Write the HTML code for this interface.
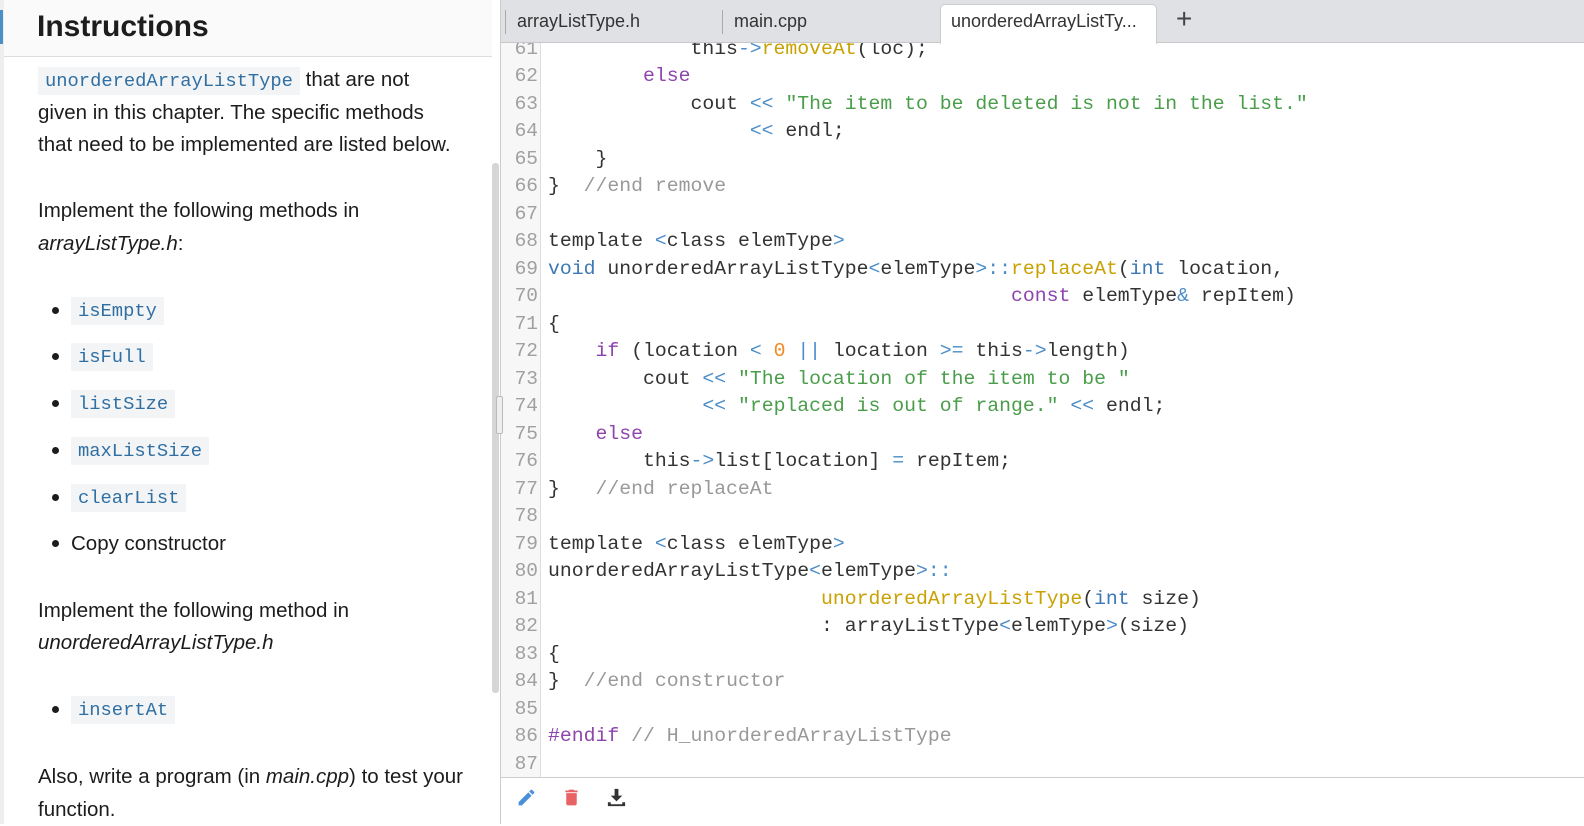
<!DOCTYPE html>
<html><head><meta charset="utf-8"><style>
*{margin:0;padding:0;box-sizing:border-box}
body{width:1584px;height:824px;overflow:hidden;background:#fff;font-family:"Liberation Sans",sans-serif;position:relative}
.left{position:absolute;left:0;top:0;width:500px;height:824px;background:#fff;border-left:4px solid #eee}
.hdr{position:absolute;left:0;top:0;width:488px;height:57px;background:#fafafa;border-bottom:1px solid #ddd}
.hdr h1{position:absolute;left:33px;top:10px;font-size:30px;font-weight:bold;color:#1d1d1d}
.stripe{position:absolute;left:0;top:10px;width:3px;height:34px;background:#4a90c8}
.t{position:absolute;left:34px;font-size:20.5px;line-height:32px;color:#1c1c1c;white-space:nowrap}
.c{font-family:"Liberation Mono",monospace;font-size:18.8px;color:#2f6fa3;background:#f3f4f5;padding:3px 7px}
.li{position:absolute;left:67px;font-size:20.5px;line-height:32px;color:#1c1c1c;white-space:nowrap}
.dot{position:absolute;left:48px;width:7px;height:7px;border-radius:50%;background:#1c1c1c}
.sb{position:absolute;left:492px;top:163px;width:7px;height:530px;background:#d6d6d6;border-radius:3px}
.split{position:absolute;left:496px;top:396px;width:7px;height:38px;background:#eee;border:1px solid #bbb;border-radius:2px}
.right{position:absolute;left:500px;top:0;width:1084px;height:824px;border-left:1px solid #ccc}
.tabs{position:absolute;left:0;top:0;width:1084px;height:43px;background:#dfe1e5;border-bottom:1px solid #c8c8c8}
.tab{position:absolute;top:11px;font-size:18px;color:#333}
.sep{position:absolute;top:10px;width:1px;height:24px;background:#aaa}
.act{position:absolute;left:439px;top:4px;width:217px;height:40px;background:#fff;border-radius:5px 5px 0 0;border:1px solid #ccc;border-bottom:none}
.gut{position:absolute;left:0;top:43px;width:40px;height:734px;background:#f7f7f7;border-right:1px solid #ddd}
.code{position:absolute;left:0;top:43px;width:1084px;height:734px;overflow:hidden}
.in{position:absolute;left:0;top:2px;width:1084px;height:734px}
.ln{position:absolute;left:0;width:37px;text-align:right;font-family:"Liberation Mono",monospace;font-size:19.5px;line-height:27.5px;color:#a0a0a0}
.cl{position:absolute;left:47px;font-family:"Liberation Mono",monospace;font-size:19.8px;line-height:27.5px;color:#333;white-space:pre}
.k{color:#8e44ad}.s{color:#4a9d4a}.f{color:#c9a100}.o{color:#4a8cc8}.m{color:#999}.n{color:#f08a24}.ty{color:#3b78b5}
.bar{position:absolute;left:0;top:777px;width:1084px;height:47px;border-top:1px solid #ccc;background:#fff}
</style></head><body>
<div class="left">
<div class="t" style="top:64px"><span class="c">unorderedArrayListType</span> that are not</div>
<div class="t" style="top:97px">given in this chapter. The specific methods</div>
<div class="t" style="top:129px">that need to be implemented are listed below.</div>
<div class="t" style="top:195px">Implement the following methods in</div>
<div class="t" style="top:228px"><i>arrayListType.h</i>:</div>
<div class="dot" style="top:307px"></div><div class="li" style="top:294px"><span class="c">isEmpty</span></div>
<div class="dot" style="top:353px"></div><div class="li" style="top:340px"><span class="c">isFull</span></div>
<div class="dot" style="top:400px"></div><div class="li" style="top:387px"><span class="c">listSize</span></div>
<div class="dot" style="top:447px"></div><div class="li" style="top:434px"><span class="c">maxListSize</span></div>
<div class="dot" style="top:494px"></div><div class="li" style="top:481px"><span class="c">clearList</span></div>
<div class="dot" style="top:540px"></div><div class="li" style="top:528px">Copy constructor</div>
<div class="t" style="top:595px">Implement the following method in</div>
<div class="t" style="top:627px"><i>unorderedArrayListType.h</i></div>
<div class="dot" style="top:706px"></div><div class="li" style="top:693px"><span class="c">insertAt</span></div>
<div class="t" style="top:761px">Also, write a program (in <i>main.cpp</i>) to test your</div>
<div class="t" style="top:794px">function.</div>
<div class="hdr"><h1>Instructions</h1></div>
</div>
<div class="stripe"></div>
<div class="sb"></div>
<div class="right">
<div class="gut"></div>
<div class="code"><div class="in">
<div class="ln" style="top:-9.5px">61</div><div class="cl" style="top:-9.5px">            this<span class="o">-&gt;</span><span class="f">removeAt</span>(loc);</div>
<div class="ln" style="top:18px">62</div><div class="cl" style="top:18px">        <span class="k">else</span></div>
<div class="ln" style="top:45.5px">63</div><div class="cl" style="top:45.5px">            cout <span class="o">&lt;&lt;</span> <span class="s">"The item to be deleted is not in the list."</span></div>
<div class="ln" style="top:73px">64</div><div class="cl" style="top:73px">                 <span class="o">&lt;&lt;</span> endl;</div>
<div class="ln" style="top:100.5px">65</div><div class="cl" style="top:100.5px">    }</div>
<div class="ln" style="top:128px">66</div><div class="cl" style="top:128px">}  <span class="m">//end remove</span></div>
<div class="ln" style="top:155.5px">67</div>
<div class="ln" style="top:183px">68</div><div class="cl" style="top:183px">template <span class="o">&lt;</span>class elemType<span class="o">&gt;</span></div>
<div class="ln" style="top:210.5px">69</div><div class="cl" style="top:210.5px"><span class="ty">void</span> unorderedArrayListType<span class="o">&lt;</span>elemType<span class="o">&gt;::</span><span class="f">replaceAt</span>(<span class="ty">int</span> location,</div>
<div class="ln" style="top:238px">70</div><div class="cl" style="top:238px">                                       <span class="k">const</span> elemType<span class="o">&amp;</span> repItem)</div>
<div class="ln" style="top:265.5px">71</div><div class="cl" style="top:265.5px">{</div>
<div class="ln" style="top:293px">72</div><div class="cl" style="top:293px">    <span class="k">if</span> (location <span class="o">&lt;</span> <span class="n">0</span> <span class="o">||</span> location <span class="o">&gt;=</span> this<span class="o">-&gt;</span>length)</div>
<div class="ln" style="top:320.5px">73</div><div class="cl" style="top:320.5px">        cout <span class="o">&lt;&lt;</span> <span class="s">"The location of the item to be "</span></div>
<div class="ln" style="top:348px">74</div><div class="cl" style="top:348px">             <span class="o">&lt;&lt;</span> <span class="s">"replaced is out of range."</span> <span class="o">&lt;&lt;</span> endl;</div>
<div class="ln" style="top:375.5px">75</div><div class="cl" style="top:375.5px">    <span class="k">else</span></div>
<div class="ln" style="top:403px">76</div><div class="cl" style="top:403px">        this<span class="o">-&gt;</span>list[location] <span class="o">=</span> repItem;</div>
<div class="ln" style="top:430.5px">77</div><div class="cl" style="top:430.5px">}   <span class="m">//end replaceAt</span></div>
<div class="ln" style="top:458px">78</div>
<div class="ln" style="top:485.5px">79</div><div class="cl" style="top:485.5px">template <span class="o">&lt;</span>class elemType<span class="o">&gt;</span></div>
<div class="ln" style="top:513px">80</div><div class="cl" style="top:513px">unorderedArrayListType<span class="o">&lt;</span>elemType<span class="o">&gt;::</span></div>
<div class="ln" style="top:540.5px">81</div><div class="cl" style="top:540.5px">                       <span class="f">unorderedArrayListType</span>(<span class="ty">int</span> size)</div>
<div class="ln" style="top:568px">82</div><div class="cl" style="top:568px">                       : arrayListType<span class="o">&lt;</span>elemType<span class="o">&gt;</span>(size)</div>
<div class="ln" style="top:595.5px">83</div><div class="cl" style="top:595.5px">{</div>
<div class="ln" style="top:623px">84</div><div class="cl" style="top:623px">}  <span class="m">//end constructor</span></div>
<div class="ln" style="top:650.5px">85</div>
<div class="ln" style="top:678px">86</div><div class="cl" style="top:678px"><span class="k">#endif</span> <span class="m">// H_unorderedArrayListType</span></div>
<div class="ln" style="top:705.5px">87</div>
</div></div>
<div class="tabs">
<div class="sep" style="left:4px"></div>
<div class="tab" style="left:16px">arrayListType.h</div>
<div class="sep" style="left:221px"></div>
<div class="tab" style="left:233px">main.cpp</div>
<div class="act"></div>
<div class="tab" style="left:450px">unorderedArrayListTy...</div>
<div class="tab" style="left:675px;top:3px;font-size:28px;color:#444">+</div>
</div>
<div class="bar">
<svg style="position:absolute;left:15px;top:9px" width="21" height="21" viewBox="0 0 24 24"><path fill="#4a90d9" d="M3 17.25V21h3.75L17.81 9.94l-3.75-3.75L3 17.25zM20.71 7.04a1 1 0 0 0 0-1.41l-2.34-2.34a1 1 0 0 0-1.41 0l-1.83 1.83 3.75 3.75 1.830-1.83z"/></svg>
<svg style="position:absolute;left:60px;top:8px" width="21" height="23" viewBox="0 0 24 24"><path fill="#e86464" d="M6 19c0 1.1.9 2 2 2h8c1.1 0 2-.9 2-2V7H6v12zM19 4h-3.5l-1-1h-5l-1 1H5v2h14V4z"/></svg>
<svg style="position:absolute;left:104px;top:8px" width="23" height="23" viewBox="0 0 24 24"><path fill="#333" d="M10 3h4v7h4l-6 6-6-6h4zM3 17h3v2h12v-2h3v4H3z"/></svg>
</div>
</div>
<div class="split"></div>
</body></html>
